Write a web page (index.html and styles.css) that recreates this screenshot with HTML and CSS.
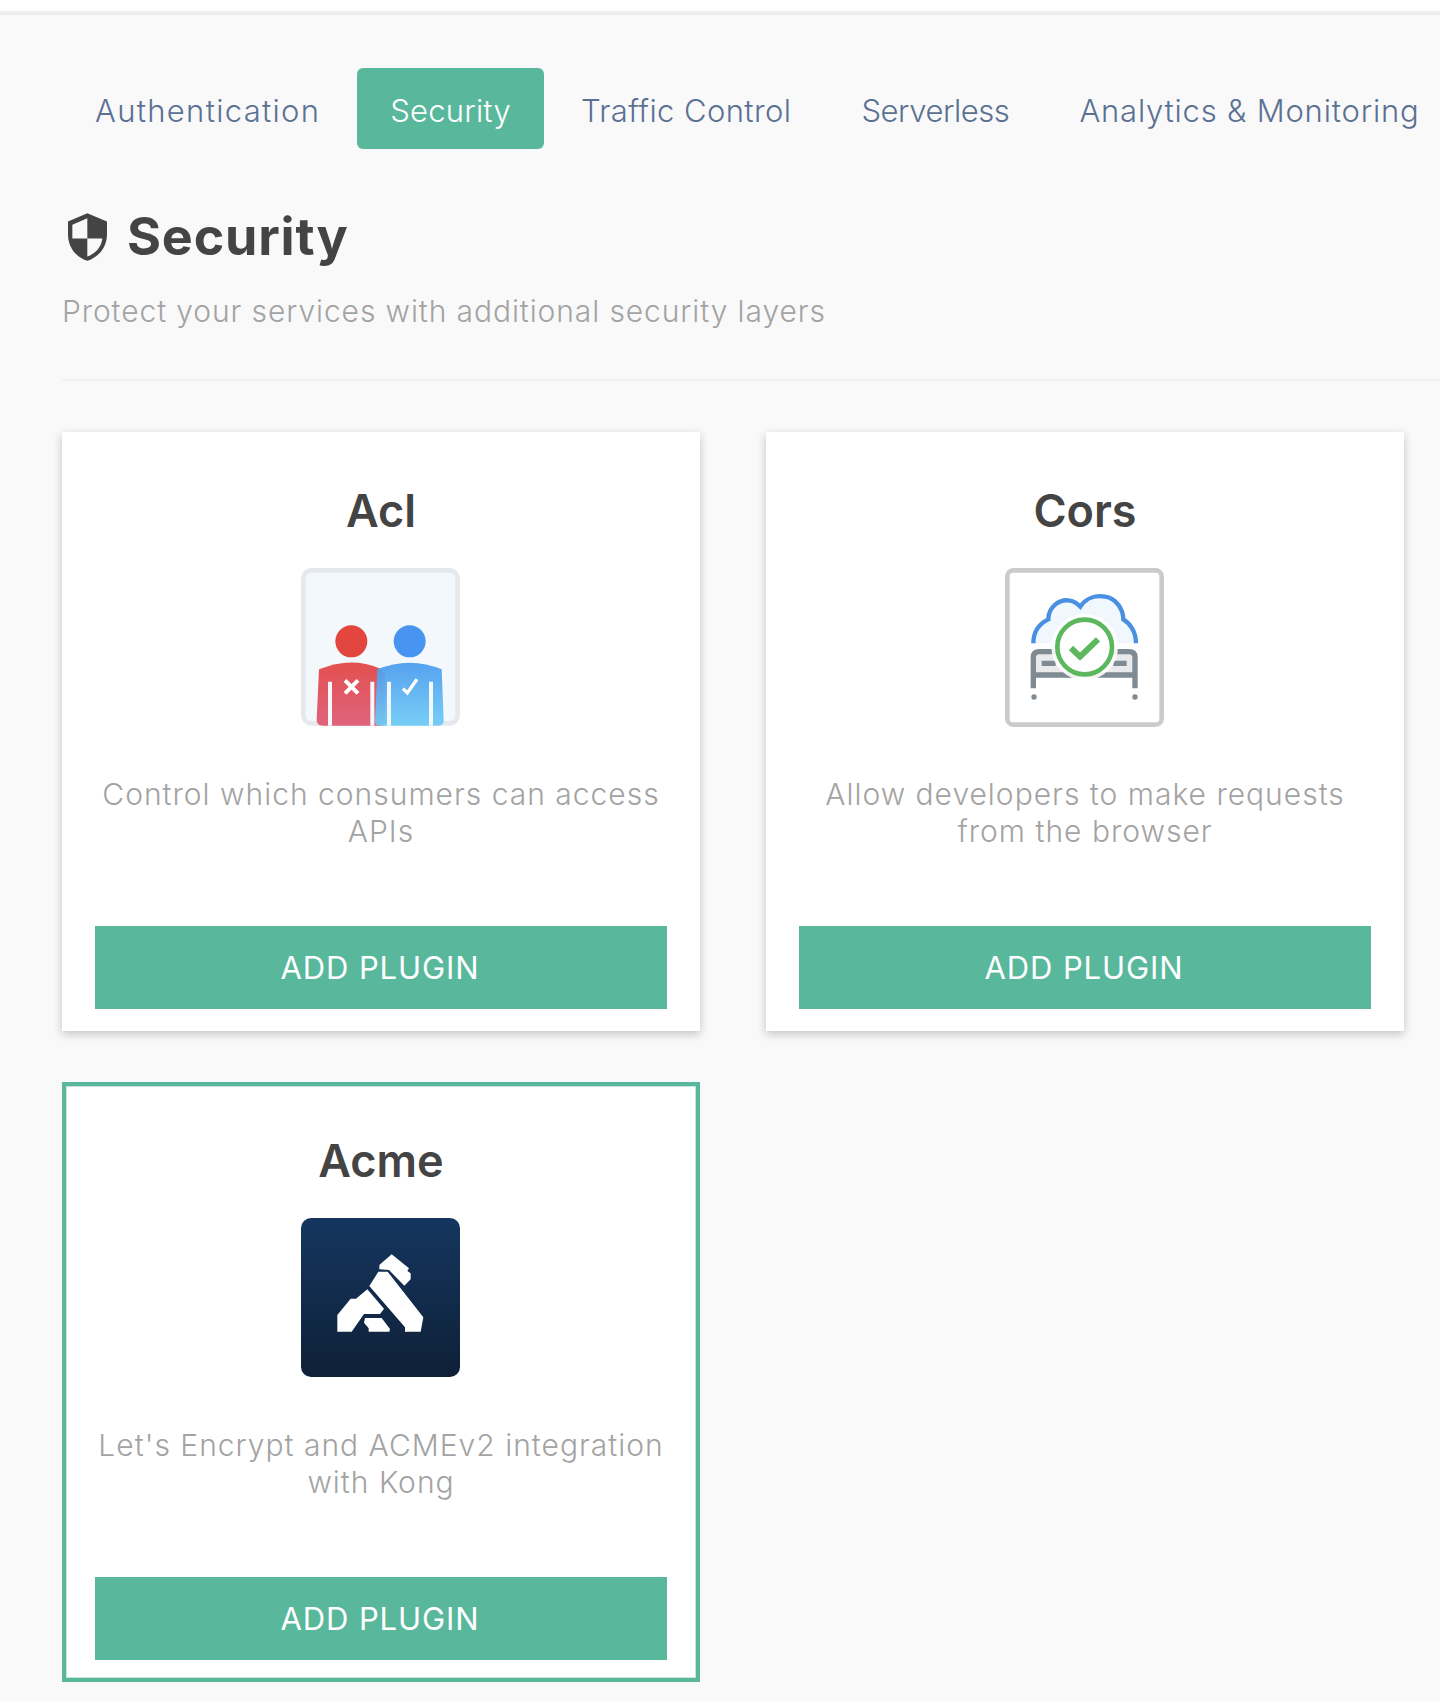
FILE: index.html
```html
<!DOCTYPE html>
<html lang="en">
<head>
    <meta charset="UTF-8">
    <meta name="viewport" content="width=device-width, initial-scale=1.0">
    <title>Plugins</title>
    <link rel="stylesheet" href="styles.css">
</head>
<body>
    <div class="topbar"></div>

    <div class="page">
        <!-- Category tabs -->
        <ul class="tabs">
            <li class="tab tab-auth">Authentication</li>
            <li class="tab tab-security active">Security</li>
            <li class="tab tab-traffic">Traffic Control</li>
            <li class="tab tab-serverless">Serverless</li>
            <li class="tab tab-analytics">Analytics &amp; Monitoring</li>
        </ul>

        <div class="section-head">
            <h1 class="section-title">
                <svg class="shield" viewBox="55 37 117 143">
                    <path fill="#444" d="M113 37 L172 62 V100 C172 140 145 170 113 180 C80 170 55 140 55 100 V62 Z"/>
                    <path fill="#f9f9f9" d="M113 52 L68 72 V113 H113 Z"/>
                    <path fill="#f9f9f9" d="M113 113 H158 C155 140 135 160 113 167 Z"/>
                </svg>
                Security
            </h1>
            <p class="section-sub">Protect your services with additional security layers</p>
        </div>

        <div class="cards">
            <div class="card">
                <h2 class="card-title">Acl</h2>
                <svg class="card-icon" viewBox="33 24 477 477">
                    <defs>
                        <linearGradient id="redBody" x1="0" y1="0" x2="0" y2="1">
                            <stop offset="0" stop-color="#e3504f"/>
                            <stop offset="1" stop-color="#e0637c"/>
                        </linearGradient>
                        <linearGradient id="blueBody" x1="0" y1="0" x2="0" y2="1">
                            <stop offset="0" stop-color="#4a9bee"/>
                            <stop offset="1" stop-color="#6ecbf6"/>
                        </linearGradient>
                    </defs>
                    <rect x="40" y="31" width="463" height="459" rx="24" fill="#f3f8fd" stroke="#e5e9ed" stroke-width="14"/>
                    <circle cx="184" cy="244" r="48" fill="#e2463f"/>
                    <circle cx="359" cy="244" r="48" fill="#4795f0"/>
                    <path fill="url(#redBody)" d="M87 328 Q184 288 268 325 L285 340 V484 Q283 497 270 497 H98 Q80 497 80 480 Z"/>
                    <path fill="url(#blueBody)" fill-opacity=".93" d="M262 328 Q359 288 455 328 L461 484 Q459 497 445 497 H270 Q255 497 255 484 Z"/>
                    <path fill="none" stroke="#f3f8fd" stroke-width="12" d="M120 365 V497 M247 365 V497 M297 365 V497 M423 365 V497"/>
                    <path d="M165 361 L204 400 M204 361 L165 400" stroke="#fff" stroke-width="12" fill="none"/>
                    <path d="M339 386 L352 399 L381 358" stroke="#fff" stroke-width="10" fill="none"/>
                </svg>
                <p class="card-desc">Control which consumers can access APIs</p>
                <button class="add-btn">ADD PLUGIN</button>
            </div>

            <div class="card">
                <h2 class="card-title">Cors</h2>
                <svg class="card-icon" viewBox="30 24 477 477">
                    <rect x="37" y="31" width="463" height="463" rx="18" fill="#fff" stroke="#cbcbcb" stroke-width="14"/>
                    <path fill="#f0f7fd" stroke="#4a90e2" stroke-width="13" d="M115 250 C115 212 135 190 160 178 C160 140 195 115 225 122 C240 124 250 134 256 140 C272 115 300 105 330 110 C365 115 385 150 385 178 C405 190 423 215 423 250"/>
                    <rect x="115" y="278" width="305" height="67" fill="#e8eaec"/>
                    <path fill="none" stroke="#7f8a93" stroke-width="16" d="M115 385 V292 Q115 275 133 275 H402 Q420 275 420 292 V385 M115 345 H420 M140 310 H182 M355 310 H395"/>
                    <circle cx="117" cy="411" r="8" fill="#7f8a93"/>
                    <circle cx="420" cy="411" r="8" fill="#7f8a93"/>
                    <circle cx="269" cy="261" r="100" fill="#fff" fill-opacity=".9"/>
                    <circle cx="269" cy="261" r="82" fill="#fff" stroke="#5cb85c" stroke-width="14"/>
                    <path d="M228 264 L255 290 L309 238" fill="none" stroke="#5cb85c" stroke-width="18"/>
                </svg>
                <p class="card-desc">Allow developers to make requests from the browser</p>
                <button class="add-btn">ADD PLUGIN</button>
            </div>

            <div class="card selected">
                <h2 class="card-title">Acme</h2>
                <svg class="card-icon" viewBox="33 24 477 477">
                    <defs>
                        <linearGradient id="kongBg" x1="0" y1="0" x2="0" y2="1">
                            <stop offset="0" stop-color="#15365f"/>
                            <stop offset="1" stop-color="#0e2037"/>
                        </linearGradient>
                    </defs>
                    <rect x="33" y="24" width="477" height="477" rx="30" fill="url(#kongBg)"/>
                    <g fill="#fff">
                        <path d="M268 165 L305 133 L357 175 L352 183 L362 190 L362 208 L343 227 L297 180 L268 178 Z"/>
                        <path d="M265 185 L293 185 L400 322 L392 365 L345 365 L345 352 L238 228 Z"/>
                        <path d="M232 238 L282 296 L270 312 L222 312 L185 365 L142 365 L142 315 L182 266 L198 266 Z"/>
                        <path d="M225 324 L275 324 L300 357 L298 365 L236 365 L236 355 L222 338 Z"/>
                    </g>
                </svg>
                <p class="card-desc">Let's Encrypt and ACMEv2 integration with Kong</p>
                <button class="add-btn">ADD PLUGIN</button>
            </div>
        </div>
    </div>
</body>
</html>
```

FILE: styles.css
```css
body {
    margin: 0;
    padding: 0;
    background-color: #f9f9f9;
    font-family: Inter, "Open Sans", sans-serif;
    overflow-x: hidden;
}
.topbar {
    height: 11px;
    background-color: #fff;
    border-bottom: 4px solid #eee;
}
.page {
    padding: 53px 0 20px 62px;
}

/* Tabs */
.tabs {
    display: flex;
    gap: 4px;
    margin: 0;
    padding: 0;
    list-style: none;
    white-space: nowrap;
}
.tab {
    padding: 0 33px;
    height: 81px;
    line-height: 85px;
    font-size: 31px;
    font-weight: 300;
    color: #5b7193;
    border-radius: 6px;
}
.tab-auth { letter-spacing: 1.3px; }
.tab-security { letter-spacing: 0.2px; }
.tab-traffic { letter-spacing: 0.4px; }
.tab-serverless { letter-spacing: -0.45px; }
.tab-analytics { letter-spacing: 0.8px; }
.tab.active {
    background-color: #59b89c;
    color: #fff;
}

/* Section heading */
.section-head {
    margin-top: 58px;
    padding-bottom: 48px;
    border-bottom: 2px solid #f1f1f1;
}
.section-title {
    display: flex;
    align-items: center;
    gap: 20px;
    margin: 0 0 0 6px;
    font-size: 52px;
    font-weight: 700;
    line-height: 60px;
    letter-spacing: 0.8px;
    color: #444;
}
.shield {
    width: 39px;
    height: 48px;
}
.section-sub {
    margin: 24px 0 0;
    font-size: 30px;
    font-weight: 300;
    line-height: 40px;
    letter-spacing: 0.9px;
    color: #a3a3a3;
}

/* Plugin cards */
.cards {
    display: grid;
    grid-template-columns: 638px 638px;
    column-gap: 66px;
    row-gap: 51px;
    margin-top: 51px;
}
.card {
    display: flex;
    flex-direction: column;
    align-items: center;
    box-sizing: border-box;
    height: 599px;
    padding: 50px 29px 18px;
    background-color: #fff;
    border: 4px solid #fff;
    box-shadow: 0 3px 9px rgba(0, 0, 0, 0.22);
}
.card.selected {
    height: 600px;
    border-color: #59b89c;
    box-shadow: inset 0 0 0 1px #c4e6db;
}
.card.selected .card-desc {
    margin-top: 50px;
}
.card-title {
    margin: 0;
    font-size: 45px;
    font-weight: 600;
    line-height: 50px;
    color: #444;
}
.card-icon {
    width: 159px;
    height: 159px;
    margin: 32px 2px 0 0;
}
.card-desc {
    margin: 49px 0 0;
    font-size: 30px;
    font-weight: 300;
    line-height: 37px;
    letter-spacing: 1px;
    text-align: center;
    color: #a3a3a3;
}
.add-btn {
    width: 100%;
    height: 83px;
    margin-top: auto;
    padding-right: 8px;
    border: none;
    background-color: #59b89c;
    color: #fff;
    font-family: inherit;
    font-size: 31px;
    font-weight: 400;
    letter-spacing: 0.9px;
}
```
